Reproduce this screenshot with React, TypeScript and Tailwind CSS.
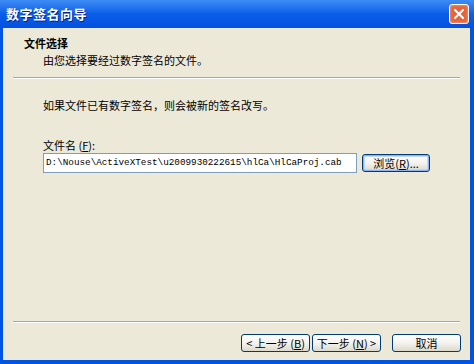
import React from "react";

const cjk = { fontFamily: "'Noto Sans CJK SC', 'Noto Sans', sans-serif" };

function Mn({ c }: { c: string }) {
  return (
    <>
      (<span className="underline underline-offset-1">{c}</span>)
    </>
  );
}

function XpButton({
  children,
  className = "",
  focused = false,
}: {
  children: React.ReactNode;
  className?: string;
  focused?: boolean;
}) {
  return (
    <button
      className={
        "h-[18px] rounded-[3px] border border-[#003c74] bg-gradient-to-b from-[#ffffff] via-[#f4f3ee] to-[#dcd9cc] text-[11px] leading-none text-black flex items-center justify-center " +
        (focused ? "shadow-[inset_0_0_0_1px_#8cb4f2,inset_0_0_0_2px_#c1d7f8] " : "") +
        className
      }
      style={cjk}>
      {children}
    </button>
  );
}

export default function App() {
  return (
    <div className="w-[474px] h-[364px] flex flex-col bg-[#0054e3] overflow-hidden select-none" style={cjk}>
      {/* TITLE BAR */}
      <div className="h-[28px] shrink-0 flex items-center justify-between pl-[6px] pr-[5px] bg-gradient-to-b from-[#3d8cf5] via-[#0a5ee8] to-[#0350df]">
        <span className="text-white text-[13px] font-bold tracking-[0.5px] [text-shadow:1px_1px_0_#0a1e8a]">
          数字签名向导
        </span>
        <div className="w-[20px] h-[20px] rounded-[3px] border border-white bg-[#e5633b] shadow-[inset_0_0_3px_#f7b095] flex items-center justify-center">
          <svg width="12" height="12" viewBox="0 0 12 12">
            <path d="M2 2 L10 10 M10 2 L2 10" stroke="white" strokeWidth="2.2" strokeLinecap="round" />
          </svg>
        </div>
      </div>

      {/* BODY */}
      <div className="flex-1 flex flex-col bg-[#ece9d8] ml-[3px] mr-[4px] mb-[4px] text-[11px] leading-[14px] text-black">
        <div className="pl-[21px] pt-[8px]">
          <div className="font-bold">文件选择</div>
          <div className="mt-[3px] pl-[19px]">由您选择要经过数字签名的文件。</div>
        </div>

        <div className="mx-[10px] mt-[10px] h-[2px] border-t border-[#aca899] border-b border-b-white" />

        <div className="pl-[40px] mt-[19px]">如果文件已有数字签名，则会被新的签名改写。</div>

        <div className="pl-[40px] mt-[26px]">
          文件名 <Mn c="F" />:
        </div>
        <div className="pl-[40px] mt-[1px] flex items-start gap-[5px]">
          <div
            className="w-[314px] h-[20px] border border-[#7f9db9] bg-white pl-[2px] flex items-center text-[9.3px] text-black whitespace-nowrap overflow-hidden"
            style={{ fontFamily: "'Liberation Mono', monospace" }}>
            D:\Nouse\ActiveXTest\u2009930222615\hlCa\HlCaProj.cab
          </div>
          <XpButton className="w-[68px] mt-[1px]" focused>
            浏览<Mn c="R" />...
          </XpButton>
        </div>

        <div className="flex-1" />

        <div className="mx-[10px] h-[2px] border-t border-[#aca899] border-b border-b-white" />

        <div className="flex justify-end pr-[9px] mt-[11px] mb-[8px]">
          <XpButton className="w-[69px]">
            &lt; 上一步 <Mn c="B" />
          </XpButton>
          <XpButton className="w-[69px] ml-[2px]">
            下一步 <Mn c="N" /> &gt;
          </XpButton>
          <XpButton className="w-[69px] ml-[11px]">取消</XpButton>
        </div>
      </div>
    </div>
  );
}
